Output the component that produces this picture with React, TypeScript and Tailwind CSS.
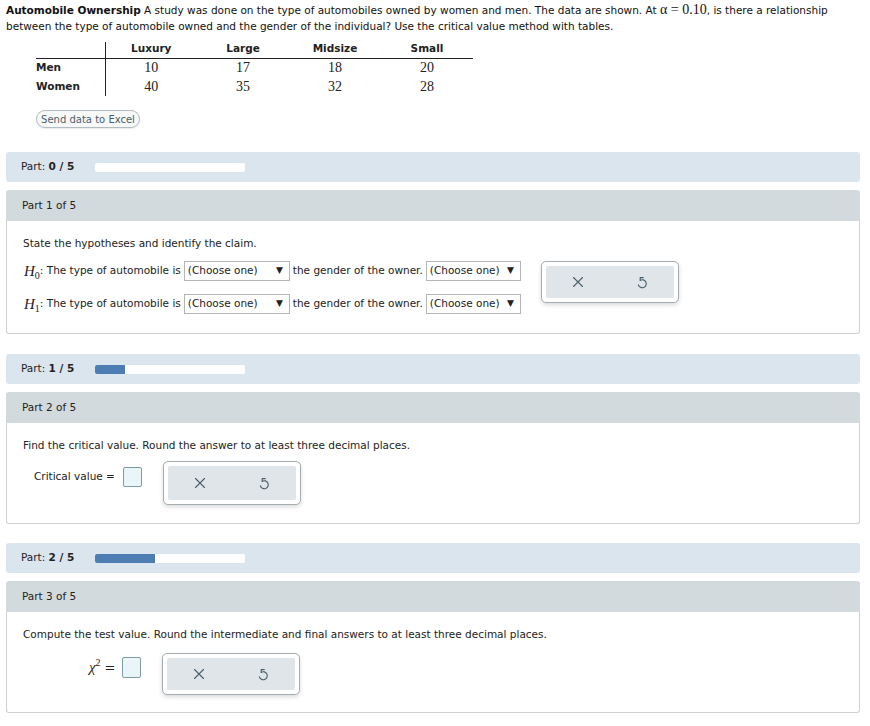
import React from "react";

function ResetIcon() {
  return (
    <svg width="14" height="14" viewBox="0 0 14 14" fill="none">
      <path d="M8.3 2.6 H5.2 V5.3" stroke="#4b5d68" strokeWidth="1.1" strokeLinecap="round" strokeLinejoin="round" />
      <path d="M5.2 5.3 A4 4 0 1 1 3.4 9.8" stroke="#4b5d68" strokeWidth="1.1" strokeLinecap="round" />
    </svg>
  );
}

function XIcon() {
  return (
    <svg width="12" height="12" viewBox="0 0 12 12" fill="none">
      <path d="M1.5 1.5 L10.5 10.5 M10.5 1.5 L1.5 10.5" stroke="#4b5d68" strokeWidth="1.1" strokeLinecap="round" />
    </svg>
  );
}

function ActionBox({ h }: { h: string }) {
  return (
    <div className={"w-[138px] rounded-[5px] border border-[#a4adb2] bg-white p-[4px] shadow-[0_2px_4px_rgba(0,0,0,0.15)] " + h}>
      <div className="h-full rounded-[2px] bg-[#dfe5e8] flex">
        <div className="flex-1 flex items-center justify-center">
          <XIcon />
        </div>
        <div className="flex-1 flex items-center justify-center">
          <ResetIcon />
        </div>
      </div>
    </div>
  );
}

function Select({ w }: { w: string }) {
  return (
    <span className={"inline-flex items-center justify-between h-[20px] border border-[#b5b5b5] bg-white pl-[3px] pr-[6px] mx-[3px] " + w}>
      <span>(Choose one)</span>
      <span className="text-[9px]">▼</span>
    </span>
  );
}

function ProgressBar({ done }: { done: number }) {
  return (
    <div className="mx-[6px] w-[854px] h-[30px] rounded-[3px] bg-[#dbe5ee] flex items-center pl-[15px]">
      <span className="w-[74px]">
        Part: <b>{done} / 5</b>
      </span>
      <div className="w-[150px] h-[9px] bg-white rounded-[2px] overflow-hidden">
        <div className="h-full bg-[#4d7db3]" style={{ width: done * 30 }} />
      </div>
    </div>
  );
}

function PartPanel({ n, height, children }: { n: number; height: string; children: React.ReactNode }) {
  return (
    <div className="mx-[6px] w-[854px] mt-[8px]">
      <div className="h-[31px] bg-[#d3dadd] rounded-t-[3px] flex items-center pl-[16px]">Part {n} of 5</div>
      <div className={"border border-t-0 border-[#d0d0d0] rounded-b-[3px] bg-white pl-[16px] " + height}>{children}</div>
    </div>
  );
}

function Hyp({ sub }: { sub: string }) {
  return (
    <div className="flex items-center h-[20px]">
      <span className="font-['Liberation_Serif',serif] italic text-[15px] ml-[1px]">H</span>
      <span className="font-['Liberation_Serif',serif] text-[10px] mt-[8px]">{sub}</span>
      <span>: The type of automobile is</span>
      <Select w="w-[106px]" />
      <span>the gender of the owner.</span>
      <Select w="w-[95px]" />
    </div>
  );
}

export default function App() {
  const cols = ["Luxury", "Large", "Midsize", "Small"];
  const rows = [
    { label: "Men", vals: [10, 17, 18, 20] },
    { label: "Women", vals: [40, 35, 32, 28] },
  ];
  return (
    <div className="w-[870px] min-h-[726px] bg-white text-[10.5px] text-[#222] font-['DejaVu_Sans',Verdana,sans-serif] overflow-hidden">
      {/* question */}
      <p className="px-[6px] pt-[2px] leading-[16px] text-[#111]">
        <b>Automobile Ownership</b> A study was done on the type of automobiles owned by women and men. The data are shown. At{" "}
        <span className="inline-block h-[13px] font-['Liberation_Serif',serif] text-[14px] leading-[13px]">α = 0.10</span>, is there a relationship between the type of automobile owned and the gender of the individual? Use the critical value method with tables.
      </p>

      {/* data table */}
      <table className="ml-[36px] mt-[8px] border-collapse">
        <thead>
          <tr className="h-[16px]">
            <th className="w-[69px] border-r border-b border-[#222]"></th>
            {cols.map((c) => (
              <th key={c} className="w-[92px] border-b border-[#222] font-bold text-center leading-[13px] align-top">
                {c}
              </th>
            ))}
          </tr>
        </thead>
        <tbody>
          {rows.map((r) => (
            <tr key={r.label} className="h-[19px]">
              <td className="font-bold border-r border-[#222] leading-[17px]">{r.label}</td>
              {r.vals.map((v, i) => (
                <td key={i} className="text-center font-['Liberation_Serif',serif] text-[14px] leading-[17px]">
                  {v}
                </td>
              ))}
            </tr>
          ))}
        </tbody>
      </table>

      <button className="ml-[36px] mt-[14px] h-[18px] w-[104px] rounded-full border border-[#b2bcc0] bg-[#f7f9f9] text-[10px] text-[#4a5f6b] flex items-center justify-center shadow-[0_1px_1px_rgba(0,0,0,0.08)]">
        Send data to Excel
      </button>

      {/* part 1 */}
      <div className="mt-[24px]">
        <ProgressBar done={0} />
        <PartPanel n={1} height="h-[113px]">
          <div className="pt-[15px] leading-[14px]">State the hypotheses and identify the claim.</div>
          <div className="flex items-start mt-[11px]">
            <div className="flex flex-col gap-[13px]">
              <Hyp sub="0" />
              <Hyp sub="1" />
            </div>
            <div className="ml-[17px]">
              <ActionBox h="h-[42px]" />
            </div>
          </div>
        </PartPanel>
      </div>

      {/* part 2 */}
      <div className="mt-[20px]">
        <ProgressBar done={1} />
        <PartPanel n={2} height="h-[101px]">
          <div className="pt-[15px] leading-[14px]">Find the critical value. Round the answer to at least three decimal places.</div>
          <div className="flex items-start mt-[9px]">
            <div className="flex items-center pt-[6px] pl-[11px]">
              <span>Critical value =</span>
              <span className="ml-[8px] w-[19px] h-[20px] border border-[#7d9ba6] rounded-[2px] bg-[#eaf5f9]"></span>
            </div>
            <div className="ml-[21px]">
              <ActionBox h="h-[44px]" />
            </div>
          </div>
        </PartPanel>
      </div>

      {/* part 3 */}
      <div className="mt-[19px]">
        <ProgressBar done={2} />
        <PartPanel n={3} height="h-[101px]">
          <div className="pt-[15px] leading-[14px]">Compute the test value. Round the intermediate and final answers to at least three decimal places.</div>
          <div className="flex items-start mt-[12px]">
            <div className="flex items-center pt-[3px] pl-[66px]">
              <span className="font-['Liberation_Serif',serif] italic text-[15px]">χ</span>
              <span className="font-['Liberation_Serif',serif] text-[10px] -mt-[10px]">2</span>
              <span className="ml-[4px] text-[13px]">=</span>
              <span className="ml-[6px] w-[19px] h-[21px] border border-[#7d9ba6] rounded-[2px] bg-[#eaf5f9]"></span>
            </div>
            <div className="ml-[21px]">
              <ActionBox h="h-[42px]" />
            </div>
          </div>
        </PartPanel>
      </div>
    </div>
  );
}
